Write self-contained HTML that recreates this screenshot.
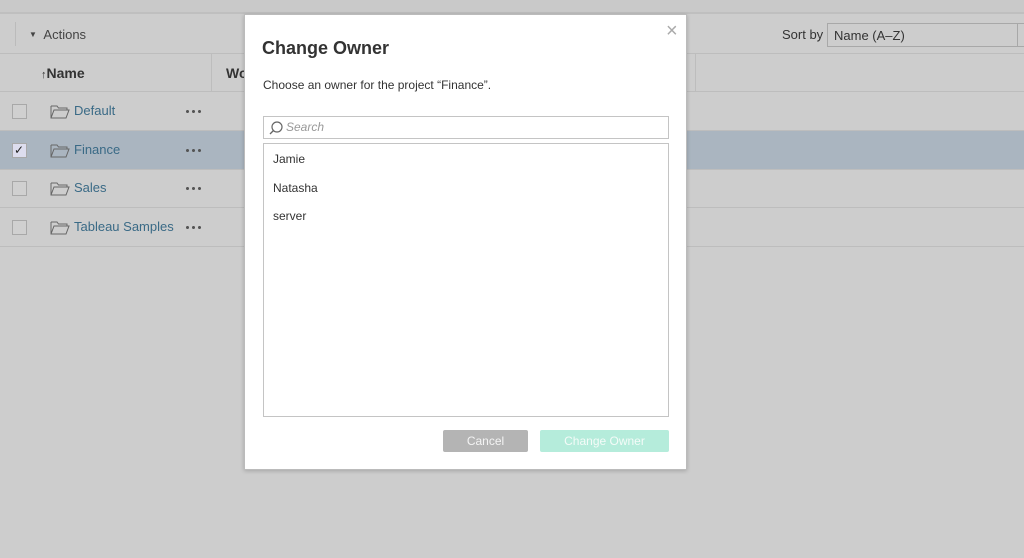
<!DOCTYPE html>
<html><head><style>
*{box-sizing:border-box;margin:0;padding:0}
body{width:1024px;height:558px;background:#cdcdcd;font-family:"Liberation Sans",sans-serif;position:relative;overflow:hidden;color:#333}
.abs{position:absolute}
.row{position:absolute;left:0;width:1024px;height:39px;border-bottom:1px solid #bdbdbd}
.cb{position:absolute;left:12px;top:12px;width:15px;height:15px;border:1px solid #a8a8a8;background:#d0d0d0}
.nm{position:absolute;left:74px;top:11px;font-size:13px;color:#3a6a86}
.dots{position:absolute;left:186px;top:18px;width:16px;height:3px;background:radial-gradient(circle at 1.5px 1.5px,#555 1.4px,transparent 1.6px) 0 0/6px 3px repeat-x}
.fold{position:absolute;left:50px;top:12px}
</style></head><body>
<div class="abs" style="left:0;top:0;width:1024px;height:14px;background:#c9c9c9;border-bottom:2px solid #bfbfbf"></div>
<div class="abs" style="left:0;top:14px;width:1024px;height:40px;border-bottom:1px solid #bdbdbd"></div>
<div class="abs" style="left:15px;top:22px;width:1px;height:24px;background:#bbb"></div>
<div class="abs" style="left:29px;top:27px;font-size:13px;color:#444"><span style="font-size:8px;vertical-align:2px">▼</span>&nbsp; Actions</div>
<div class="abs" style="left:782px;top:27px;font-size:13px;color:#333">Sort by</div>
<div class="abs" style="left:827px;top:23px;width:210px;height:24px;border:1px solid #a8a8a8;font-size:13px;padding:4px 6px;color:#333">Name (A–Z)</div>
<div class="abs" style="left:1017px;top:23px;width:1px;height:24px;background:#a8a8a8"></div>
<div class="abs" style="left:0;top:54px;width:1024px;height:38px;border-bottom:1px solid #bdbdbd"></div>
<div class="abs" style="left:211px;top:54px;width:1px;height:38px;background:#bdbdbd"></div>
<div class="abs" style="left:695px;top:54px;width:1px;height:38px;background:#bdbdbd"></div>
<div class="abs" style="left:41px;top:65px;font-size:14px;font-weight:bold;color:#333"><span style="font-size:11px;font-weight:normal">↑</span>Name</div>
<div class="abs" style="left:226px;top:65px;font-size:14px;font-weight:bold;color:#333">Wo</div>
<div class="row" style="top:92px"><div class="cb"></div><svg class="fold" width="20" height="15" viewBox="0 0 20 15"><path d="M1 2h6l1.5 2H17v2M1 2v12h15l3-8H4l-3 8" fill="none" stroke="#666" stroke-width="1"/></svg><div class="nm">Default</div><div class="dots"></div></div>
<div class="row" style="top:131px;background:#aab5c0"><div class="cb" style="background:#dde">  </div><div class="abs" style="left:14px;top:12px;font-size:12px;color:#222">✓</div><svg class="fold" width="20" height="15" viewBox="0 0 20 15"><path d="M1 2h6l1.5 2H17v2M1 2v12h15l3-8H4l-3 8" fill="none" stroke="#666" stroke-width="1"/></svg><div class="nm">Finance</div><div class="dots"></div></div>
<div class="row" style="top:169px"><div class="cb"></div><svg class="fold" width="20" height="15" viewBox="0 0 20 15"><path d="M1 2h6l1.5 2H17v2M1 2v12h15l3-8H4l-3 8" fill="none" stroke="#666" stroke-width="1"/></svg><div class="nm">Sales</div><div class="dots"></div></div>
<div class="row" style="top:208px"><div class="cb"></div><svg class="fold" width="20" height="15" viewBox="0 0 20 15"><path d="M1 2h6l1.5 2H17v2M1 2v12h15l3-8H4l-3 8" fill="none" stroke="#666" stroke-width="1"/></svg><div class="nm">Tableau Samples</div><div class="dots"></div></div>

<div class="abs" style="left:244px;top:14px;width:443px;height:456px;background:#fff;border:1px solid #bbb;box-shadow:0 1px 4px rgba(0,0,0,.2)">
<div class="abs" style="left:421px;top:5px;font-size:20px;color:#aaa">×</div>
<div class="abs" style="left:17px;top:23px;font-size:18px;font-weight:bold;color:#333">Change Owner</div>
<div class="abs" style="left:18px;top:63px;font-size:12px;color:#333">Choose an owner for the project “Finance”.</div>
<div class="abs" style="left:18px;top:101px;width:406px;height:23px;border:1px solid #c4c4c4"></div>
<svg class="abs" style="left:24px;top:106px" width="14" height="14" viewBox="0 0 14 14"><circle cx="8" cy="6" r="5" fill="none" stroke="#666" stroke-width="1.2"/><path d="M4.5 9.5L1 13" stroke="#666" stroke-width="1.3"/></svg>
<div class="abs" style="left:41px;top:105px;font-size:12px;font-style:italic;color:#999">Search</div>
<div class="abs" style="left:18px;top:128px;width:406px;height:274px;border:1px solid #c4c4c4"></div>
<div class="abs" style="left:28px;top:137px;font-size:12px">Jamie</div>
<div class="abs" style="left:28px;top:166px;font-size:12px">Natasha</div>
<div class="abs" style="left:28px;top:194px;font-size:12px">server</div>
<div class="abs" style="left:198px;top:415px;width:85px;height:22px;background:#b4b4b4;border-radius:2px;color:#f4f4f4;font-size:12px;text-align:center;line-height:22px">Cancel</div>
<div class="abs" style="left:295px;top:415px;width:129px;height:22px;background:#b5ecdb;border-radius:2px;color:#f4fbf8;font-size:12px;text-align:center;line-height:22px">Change Owner</div>
</div>
</body></html>
